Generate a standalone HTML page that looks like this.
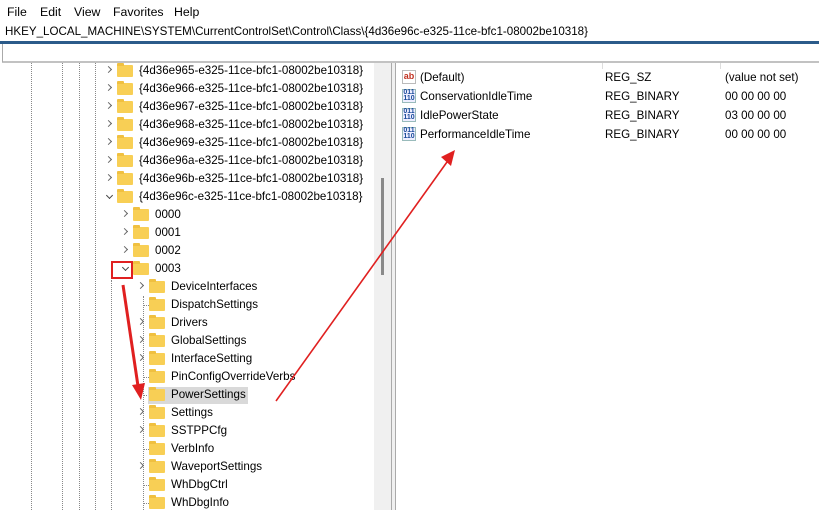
<!DOCTYPE html>
<html><head><meta charset="utf-8"><style>
*{margin:0;padding:0;box-sizing:border-box}
body{width:819px;height:510px;overflow:hidden;background:#fff;font-family:"Liberation Sans",sans-serif;font-size:11.6px;color:#000;position:relative}
.abs{position:absolute}
.menu span{position:absolute;top:5px;font-size:12.3px}
.r{position:absolute;height:18px;line-height:18px;white-space:nowrap}
.f{position:absolute;top:3px;width:16px;height:12px;background:#f8cf55;border-radius:1px}
.f:before{content:"";position:absolute;left:0;top:-2px;width:7px;height:3px;background:#f0c040;border-radius:1px 1px 0 0}
.c{position:absolute;top:5px;width:5px;height:5px;border-right:1.3px solid #666;border-bottom:1.3px solid #666;transform:rotate(-45deg)}
.d{position:absolute;top:1px;width:5px;height:5px;border-right:1.3px solid #444;border-bottom:1.3px solid #444;transform:rotate(45deg)}
.t{position:absolute;top:0}
.vl{position:absolute;border-left:1px dotted #888}
.hl{position:absolute;border-top:1px dotted #888;width:8px}
.lr{position:absolute;height:19px;line-height:19px;white-space:nowrap}
.ic{position:absolute;left:5px;top:2px;width:14px;height:14px;border:1px solid #9bb;background:#eef;font-size:7px;line-height:6px;color:#1a4a9a;font-weight:bold;text-align:center}
</style></head><body>
<div class="menu"><span style="left:7px">File</span><span style="left:40px">Edit</span><span style="left:74px">View</span><span style="left:113px">Favorites</span><span style="left:174px">Help</span></div>
<div class="abs" style="left:0;top:22px;width:819px;height:20px;line-height:20px;padding-left:5px;font-size:11.6px">HKEY_LOCAL_MACHINE\SYSTEM\CurrentControlSet\Control\Class\{4d36e96c-e325-11ce-bfc1-08002be10318}</div>
<div class="abs" style="left:0;top:41px;width:819px;height:3px;background:#2b5b8a"></div>
<div class="abs" style="left:2px;top:61px;width:817px;height:2px;background:#999;opacity:.6"></div>
<div class="abs" style="left:2px;top:44px;width:1px;height:18px;background:#aaa"></div>
<!-- scrollbar -->
<div class="abs" style="left:374px;top:63px;width:17px;height:447px;background:#f0f0f0"></div>
<div class="abs" style="left:381px;top:178px;width:3px;height:97px;background:#8a8a8a"></div>
<div class="abs" style="left:391px;top:63px;width:1px;height:447px;background:#aaa"></div>
<div class="abs" style="left:392px;top:63px;width:3px;height:447px;background:#f0f0f0"></div>
<div class="abs" style="left:395px;top:63px;width:1px;height:447px;background:#aaa"></div>
<div class="abs" style="left:602px;top:63px;width:1px;height:6px;background:#ddd"></div>
<div class="abs" style="left:720px;top:63px;width:1px;height:6px;background:#ddd"></div>
<!-- tree dotted lines -->
<div class="vl" style="left:31px;top:63px;height:447px"></div>
<div class="vl" style="left:62px;top:63px;height:447px"></div>
<div class="vl" style="left:79px;top:63px;height:447px"></div>
<div class="vl" style="left:95px;top:63px;height:447px"></div>
<div class="vl" style="left:111px;top:280px;height:230px"></div>
<div class="vl" style="left:143px;top:296px;height:214px"></div>
<div class="hl" style="left:143px;top:305px"></div>
<div class="hl" style="left:143px;top:377px"></div>
<div class="hl" style="left:143px;top:395px"></div>
<div class="hl" style="left:143px;top:449px"></div>
<div class="hl" style="left:143px;top:485px"></div>
<div class="hl" style="left:143px;top:503px"></div>
<!-- level0 -->
<div class="r" style="left:0;top:62px;width:370px"><i class="c" style="left:106px"></i><i class="f" style="left:117px"></i><span class="t" style="left:139px">{4d36e965-e325-11ce-bfc1-08002be10318}</span></div>
<div class="r" style="left:0;top:80px;width:370px"><i class="c" style="left:106px"></i><i class="f" style="left:117px"></i><span class="t" style="left:139px">{4d36e966-e325-11ce-bfc1-08002be10318}</span></div>
<div class="r" style="left:0;top:98px;width:370px"><i class="c" style="left:106px"></i><i class="f" style="left:117px"></i><span class="t" style="left:139px">{4d36e967-e325-11ce-bfc1-08002be10318}</span></div>
<div class="r" style="left:0;top:116px;width:370px"><i class="c" style="left:106px"></i><i class="f" style="left:117px"></i><span class="t" style="left:139px">{4d36e968-e325-11ce-bfc1-08002be10318}</span></div>
<div class="r" style="left:0;top:134px;width:370px"><i class="c" style="left:106px"></i><i class="f" style="left:117px"></i><span class="t" style="left:139px">{4d36e969-e325-11ce-bfc1-08002be10318}</span></div>
<div class="r" style="left:0;top:152px;width:370px"><i class="c" style="left:106px"></i><i class="f" style="left:117px"></i><span class="t" style="left:139px">{4d36e96a-e325-11ce-bfc1-08002be10318}</span></div>
<div class="r" style="left:0;top:170px;width:370px"><i class="c" style="left:106px"></i><i class="f" style="left:117px"></i><span class="t" style="left:139px">{4d36e96b-e325-11ce-bfc1-08002be10318}</span></div>
<div class="r" style="left:0;top:188px;width:370px"><i class="d" style="left:107px;top:5px"></i><i class="f" style="left:117px"></i><span class="t" style="left:139px">{4d36e96c-e325-11ce-bfc1-08002be10318}</span></div>
<!-- level1 -->
<div class="r" style="left:0;top:206px;width:370px"><i class="c" style="left:122px"></i><i class="f" style="left:133px"></i><span class="t" style="left:155px">0000</span></div>
<div class="r" style="left:0;top:224px;width:370px"><i class="c" style="left:122px"></i><i class="f" style="left:133px"></i><span class="t" style="left:155px">0001</span></div>
<div class="r" style="left:0;top:242px;width:370px"><i class="c" style="left:122px"></i><i class="f" style="left:133px"></i><span class="t" style="left:155px">0002</span></div>
<div class="r" style="left:0;top:260px;width:370px"><i class="d" style="left:123px;top:5px"></i><i class="f" style="left:133px"></i><span class="t" style="left:155px">0003</span></div>
<div class="abs" style="left:111px;top:261px;width:22px;height:18px;border:2px solid #e02020"></div>
<!-- level2 -->
<div class="r" style="left:0;top:278px;width:370px"><i class="c" style="left:138px"></i><i class="f" style="left:149px"></i><span class="t" style="left:171px">DeviceInterfaces</span></div>
<div class="r" style="left:0;top:296px;width:370px"><i class="f" style="left:149px"></i><span class="t" style="left:171px">DispatchSettings</span></div>
<div class="r" style="left:0;top:314px;width:370px"><i class="c" style="left:138px"></i><i class="f" style="left:149px"></i><span class="t" style="left:171px">Drivers</span></div>
<div class="r" style="left:0;top:332px;width:370px"><i class="c" style="left:138px"></i><i class="f" style="left:149px"></i><span class="t" style="left:171px">GlobalSettings</span></div>
<div class="r" style="left:0;top:350px;width:370px"><i class="c" style="left:138px"></i><i class="f" style="left:149px"></i><span class="t" style="left:171px">InterfaceSetting</span></div>
<div class="r" style="left:0;top:368px;width:370px"><i class="f" style="left:149px"></i><span class="t" style="left:171px">PinConfigOverrideVerbs</span></div>
<div class="abs" style="left:148px;top:387px;width:100px;height:17px;background:#d9d9d9"></div>
<div class="r" style="left:0;top:386px;width:370px"><i class="f" style="left:149px"></i><span class="t" style="left:171px">PowerSettings</span></div>
<div class="r" style="left:0;top:404px;width:370px"><i class="c" style="left:138px"></i><i class="f" style="left:149px"></i><span class="t" style="left:171px">Settings</span></div>
<div class="r" style="left:0;top:422px;width:370px"><i class="c" style="left:138px"></i><i class="f" style="left:149px"></i><span class="t" style="left:171px">SSTPPCfg</span></div>
<div class="r" style="left:0;top:440px;width:370px"><i class="f" style="left:149px"></i><span class="t" style="left:171px">VerbInfo</span></div>
<div class="r" style="left:0;top:458px;width:370px"><i class="c" style="left:138px"></i><i class="f" style="left:149px"></i><span class="t" style="left:171px">WaveportSettings</span></div>
<div class="r" style="left:0;top:476px;width:370px"><i class="f" style="left:149px"></i><span class="t" style="left:171px">WhDbgCtrl</span></div>
<div class="r" style="left:0;top:494px;width:370px"><i class="f" style="left:149px"></i><span class="t" style="left:171px">WhDbgInfo</span></div>
<!-- list -->
<div class="lr" style="left:397px;top:68px;width:422px"><span class="ic" style="background:#fff;color:#c03020;font-size:9px;line-height:11px;border-color:#bbb">ab</span><span class="abs" style="left:23px">(Default)</span><span class="abs" style="left:208px">REG_SZ</span><span class="abs" style="left:328px">(value not set)</span></div>
<div class="lr" style="left:397px;top:87px;width:422px"><span class="ic">011<br>110</span><span class="abs" style="left:23px">ConservationIdleTime</span><span class="abs" style="left:208px">REG_BINARY</span><span class="abs" style="left:328px">00 00 00 00</span></div>
<div class="lr" style="left:397px;top:106px;width:422px"><span class="ic">011<br>110</span><span class="abs" style="left:23px">IdlePowerState</span><span class="abs" style="left:208px">REG_BINARY</span><span class="abs" style="left:328px">03 00 00 00</span></div>
<div class="lr" style="left:397px;top:125px;width:422px"><span class="ic">011<br>110</span><span class="abs" style="left:23px">PerformanceIdleTime</span><span class="abs" style="left:208px">REG_BINARY</span><span class="abs" style="left:328px">00 00 00 00</span></div>
<!-- arrows -->
<svg class="abs" style="left:0;top:0" width="819" height="510">
<line x1="123" y1="285" x2="138" y2="386" stroke="#e02020" stroke-width="3"/>
<polygon points="132,385 145,383 141,400" fill="#e02020"/>
<line x1="276" y1="401" x2="447" y2="162" stroke="#e02020" stroke-width="1.6"/>
<polygon points="441,157 455,150 451,166" fill="#e02020"/>
</svg>
</body></html>
